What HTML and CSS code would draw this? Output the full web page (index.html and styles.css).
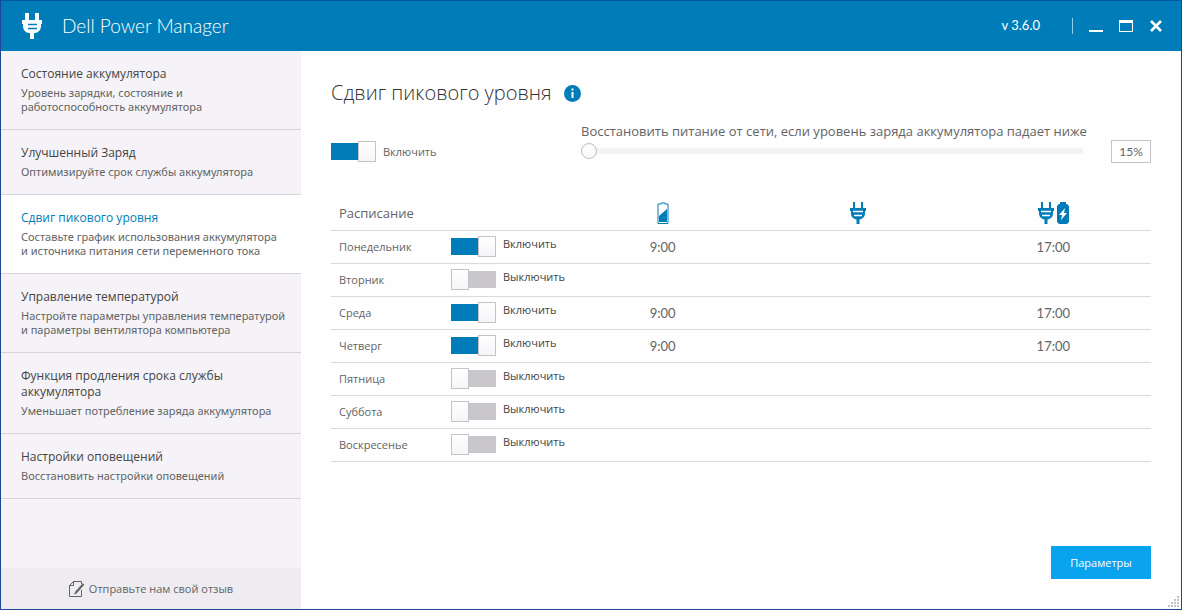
FILE: index.html
```html
<!DOCTYPE html>
<html lang="ru">
<head>
<meta charset="utf-8">
<title>Dell Power Manager</title>
<link rel="stylesheet" href="styles.css">
</head>
<body>
<svg class="sprite" aria-hidden="true">
  <symbol id="plug" viewBox="0 0 20 26">
    <path d="M3 0h4v7h6V0h4v7h3v4h-1v2c0 4-3 7-6 7h-1v6H8v-6H7c-3 0-6-3-6-7v-2H0V7h3z" fill="currentColor" stroke="none"/>
    <path d="M6 11.500h9M6 15.500h9" stroke-width="1.500"/>
  </symbol>
  <symbol id="plug-small" viewBox="0 0 16 22">
    <path d="M3 0h2v6h6V0h2v6h3v3h-1v2c0 4-2.500 6-5.500 6.500V22h-3v-4.500C3.500 17 1 15 1 11V9H0V6h3z" fill="currentColor" stroke="none"/>
    <path d="M3 9.500h10M4 13.500h8" stroke-width="1.500"/>
  </symbol>
</svg>
<div class="window">
  <header class="titlebar">
    <svg class="logo"><use href="#plug"/></svg>
    <span class="app-name">Dell Power Manager</span>
    <span class="version">v 3.6.0</span>
    <div class="window-controls">
      <button class="window-button" aria-label="Свернуть"><svg class="window-icon" viewBox="0 0 14 14"><path d="M0 11h14v2H0z" fill="currentColor"/></svg></button>
      <button class="window-button" aria-label="Развернуть"><svg class="window-icon" viewBox="0 0 14 14"><path d="M0 1h14v12H0zM1 4v8h12V4z" fill="currentColor" fill-rule="evenodd"/></svg></button>
      <button class="window-button" aria-label="Закрыть"><svg class="window-icon" viewBox="0 0 14 14"><path d="M2 2l10 10M12 2L2 12" stroke="currentColor" stroke-width="2.600"/></svg></button>
    </div>
  </header>
  <div class="body">
    <aside class="sidebar">
      <nav class="nav">
        <a class="nav-item" href="#battery"><span class="nav-title">Состояние аккумулятора</span><span class="nav-text">Уровень зарядки, состояние и<br>работоспособность аккумулятора</span></a>
        <a class="nav-item" href="#charge"><span class="nav-title">Улучшенный Заряд</span><span class="nav-text">Оптимизируйте срок службы аккумулятора</span></a>
        <a class="nav-item active" href="#peak" aria-current="page"><span class="nav-title">Сдвиг пикового уровня</span><span class="nav-text">Составьте график использования аккумулятора<br>и источника питания сети переменного тока</span></a>
        <a class="nav-item" href="#thermal"><span class="nav-title">Управление температурой</span><span class="nav-text">Настройте параметры управления температурой<br>и параметры вентилятора компьютера</span></a>
        <a class="nav-item" href="#extender"><span class="nav-title">Функция продления срока службы<br>аккумулятора</span><span class="nav-text">Уменьшает потребление заряда аккумулятора</span></a>
        <a class="nav-item" href="#alerts"><span class="nav-title">Настройки оповещений</span><span class="nav-text">Восстановить настройки оповещений</span></a>
      </nav>
      <a class="feedback" href="#feedback">
        <svg class="feedback-icon" viewBox="0 0 16 16" fill="none" stroke="currentColor"><path d="M12.500 9v6.500H.500V4.500l4-4h8V3M.500 4.500h4v-4"/><path d="M14.500 3L7 11.500" stroke-width="2.200"/><path d="M6.500 10.500L5 13.500l3-1z" fill="currentColor" stroke="none"/></svg>
        Отправьте нам свой отзыв
      </a>
    </aside>
    <main class="content">
      <div class="heading">
        <h1 class="page-title">Сдвиг пикового уровня</h1>
        <button class="info" aria-label="Сведения"><svg class="info-icon" viewBox="0 0 17 17"><circle cx="8.500" cy="8.500" r="8.500" fill="currentColor"/><path d="M7.500 3.500h2v2h-2zM7.500 7h2v6h-2z" fill="#fff"/></svg></button>
      </div>
      <div class="settings">
        <label class="switch"><input class="toggle" type="checkbox" checked><span class="main-label">Включить</span></label>
        <div class="threshold">
          <label class="threshold-label" for="level">Восстановить питание от сети, если уровень заряда аккумулятора падает ниже</label>
          <input class="slider" id="level" type="range" min="15" max="100" value="15">
        </div>
        <output class="percent" for="level">15%</output>
      </div>
      <table class="schedule">
        <colgroup><col class="col-day"><col class="col-state"><col><col><col></colgroup>
        <thead>
          <tr>
            <th class="day-head" colspan="2" scope="col">Расписание</th>
            <th scope="col"><svg class="head-icon battery" role="img" aria-label="Батарея" viewBox="0 0 12 22"><path d="M4 1h4v1h3v19.500H1V2h3z" fill="#fff" stroke="currentColor"/><path d="M2 14l8-7v13H2z" fill="currentColor"/></svg></th>
            <th scope="col"><svg class="head-icon" role="img" aria-label="Сеть"><use href="#plug-small"/></svg></th>
            <th scope="col"><span class="icon-pair"><svg class="head-icon" role="img" aria-label="Сеть и зарядка"><use href="#plug-small"/></svg><svg class="head-icon battery" viewBox="0 0 12 22"><path d="M3 0h6v2h1l2 2v16l-2 2H2l-2-2V4l2-2h1z" fill="currentColor"/><path d="M8 6l-6 7h3l-1 5 6-7H7z" fill="#fff"/></svg></span></th>
          </tr>
        </thead>
        <tbody>
          <tr><td class="day">Понедельник</td><td><label class="switch row-switch"><input class="toggle" type="checkbox" checked><span class="state">Включить</span></label></td><td>9:00</td><td></td><td>17:00</td></tr>
          <tr><td class="day">Вторник</td><td><label class="switch row-switch"><input class="toggle" type="checkbox"><span class="state">Выключить</span></label></td><td></td><td></td><td></td></tr>
          <tr><td class="day">Среда</td><td><label class="switch row-switch"><input class="toggle" type="checkbox" checked><span class="state">Включить</span></label></td><td>9:00</td><td></td><td>17:00</td></tr>
          <tr><td class="day">Четверг</td><td><label class="switch row-switch"><input class="toggle" type="checkbox" checked><span class="state">Включить</span></label></td><td>9:00</td><td></td><td>17:00</td></tr>
          <tr><td class="day">Пятница</td><td><label class="switch row-switch"><input class="toggle" type="checkbox"><span class="state">Выключить</span></label></td><td></td><td></td><td></td></tr>
          <tr><td class="day">Суббота</td><td><label class="switch row-switch"><input class="toggle" type="checkbox"><span class="state">Выключить</span></label></td><td></td><td></td><td></td></tr>
          <tr><td class="day">Воскресенье</td><td><label class="switch row-switch"><input class="toggle" type="checkbox"><span class="state">Выключить</span></label></td><td></td><td></td><td></td></tr>
        </tbody>
      </table>
      <button class="options">Параметры</button>
    </main>
  </div>
  <svg class="grip" viewBox="0 0 11 11" fill="#c4c2c6" aria-hidden="true"><path d="M9 0h2v2H9zM6 3h2v2H6zM9 3h2v2H9zM3 6h2v2H3zM6 6h2v2H6zM9 6h2v2H9zM0 9h2v2H0zM3 9h2v2H3zM6 9h2v2H6zM9 9h2v2H9z"/></svg>
</div>
</body>
</html>
```
FILE: styles.css
```css
*, *::before { box-sizing: border-box; }

body {
  margin: 0;
  font-family: "Open Sans", "Noto Sans", sans-serif;
  font-size: 12px;
  color: #636466;
}

button { font: inherit; border: 0; padding: 0; background: none; color: inherit; }
a { color: inherit; text-decoration: none; }

.sprite { position: absolute; width: 0; height: 0; }

.window {
  position: relative;
  display: flex;
  flex-direction: column;
  min-height: 100vh;
  border: 1px solid #1f4796;
  border-top-color: #0058a5;
  background: #fefefe;
}

.titlebar {
  display: flex;
  align-items: center;
  height: 50px;
  padding: 0 18px 0 21px;
  background: #007db8;
  color: #fff;
}
.logo { width: 20px; height: 26px; stroke: #007db8; }
.app-name, .version { padding-bottom: 2px; font-family: Lato, sans-serif; }
.app-name { margin-left: 20px; font-size: 19px; font-weight: 300; }
.version { margin-left: auto; font-size: 13px; }
.window-controls {
  display: flex;
  align-items: center;
  gap: 16px;
  height: 16px;
  margin-left: 32px;
  padding-left: 16px;
  border-left: 1px solid #8fd0ec;
}
.window-icon { display: block; width: 14px; height: 14px; }

.body { display: flex; flex: 1; }

.sidebar {
  display: flex;
  flex-direction: column;
  flex: 0 0 300px;
  background: #f5f3f7;
}
.nav-item {
  display: flex;
  flex-direction: column;
  gap: 4px;
  padding: 15px 10px 15px 20px;
  border-bottom: 1px solid #d6d4da;
}
.nav-title { font-size: 12px; line-height: 16px; color: #444; }
.nav-text { font-family: "Noto Sans", sans-serif; font-size: 11px; line-height: 14px; white-space: nowrap; }
.active { background: #fefefe; }
.active .nav-title { color: #007db8; }

.feedback {
  display: flex;
  align-items: center;
  justify-content: center;
  gap: 4px;
  height: 41px;
  margin-top: auto;
  background: #eeecf0;
  font-size: 11px;
}
.feedback-icon { width: 16px; height: 16px; }

.content {
  display: flex;
  flex-direction: column;
  flex: 1;
  min-width: 0;
  padding: 28px 30px 30px;
}
.heading { display: flex; align-items: center; gap: 12px; }
.page-title { margin: 0; font-size: 20px; line-height: 28px; font-weight: 300; color: #333; }
.info-icon { display: block; width: 17px; height: 17px; color: #007db8; }

.settings {
  display: grid;
  grid-template-columns: 250px 1fr 40px;
  align-items: end;
  margin-top: 14px;
}
.switch { display: flex; align-items: center; gap: 7px; justify-self: start; }
.settings .switch { padding-bottom: 1px; }
.threshold { display: flex; flex-direction: column; gap: 2px; }
.threshold-label { font-size: 13px; line-height: 20px; white-space: nowrap; }
.percent {
  border: 1px solid #c5c3c8;
  line-height: 21px;
  font-family: Lato, sans-serif;
  text-align: center;
}

.toggle {
  appearance: none;
  display: flex;
  flex: none;
  align-items: stretch;
  width: 45px;
  height: 21px;
  margin: 0;
  background: linear-gradient(#c9c7cb, #c9c7cb) center / 100% 17px no-repeat;
}
.toggle::before {
  content: "";
  width: 18px;
  border: 1px solid #c5c3c8;
  background: linear-gradient(#fff, #f5f4f7);
}
.toggle:checked {
  justify-content: flex-end;
  background-image: linear-gradient(#007db8, #007db8);
}

.slider {
  appearance: none;
  width: calc(100% - 28px);
  height: 16px;
  margin: 0 0 4px;
  background: linear-gradient(#f3f2f5, #f3f2f5) center / 100% 6px no-repeat;
}
.slider::-webkit-slider-thumb {
  appearance: none;
  width: 16px;
  height: 16px;
  border: 1px solid #bfbdc3;
  border-radius: 50%;
  background: #fbfafc;
}

.schedule {
  width: 100%;
  margin-top: 34px;
  border-collapse: collapse;
  table-layout: fixed;
}
.col-day { width: 120px; }
.col-state { width: 114px; }
.schedule th, .schedule td {
  height: 33px;
  padding: 0;
  border-bottom: 1px solid #dad8dd;
  text-align: center;
}
.schedule td { font-family: Lato, sans-serif; font-size: 13px; }
.schedule .day-head { padding-left: 8px; text-align: left; font-size: 13px; font-weight: 400; }
.schedule .day { padding-left: 8px; text-align: left; font-family: "Open Sans", sans-serif; font-size: 11px; }
.row-switch { align-items: flex-start; }
.state { font-family: "Open Sans", sans-serif; font-size: 11px; line-height: 15px; color: #444; }
.main-label { font-size: 11px; }
.head-icon { display: block; width: 16px; height: 22px; margin: 0 auto; color: #007db8; stroke: #fff; }
.battery { width: 12px; stroke: none; }
.icon-pair { display: flex; justify-content: center; gap: 3px; }
.icon-pair .head-icon { margin: 0; }

.options {
  align-self: flex-end;
  width: 100px;
  height: 33px;
  margin-top: auto;
  background: #0aa3ee;
  color: #fff;
  font-size: 11px;
}

.grip { position: absolute; right: 2px; bottom: 2px; width: 11px; height: 11px; }
```
